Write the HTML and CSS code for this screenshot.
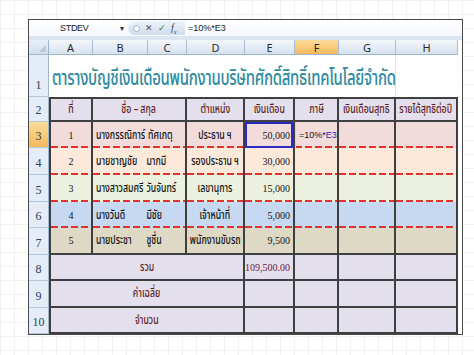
FILE: index.html
```html
<!DOCTYPE html>
<html lang="th">
<head>
  <meta charset="UTF-8" />
  <title>ตารางบัญชีเงินเดือน</title>
  <link rel="stylesheet" href="styles.css">
</head>
<body>

  <div class="window">
    <div class="formula-bar">
      <div class="name-box">STDEV</div>
      <div class="name-arrow">▾</div>
      <div class="fx-buttons">
        <span class="dot"></span>
        <span class="btn-x">✕</span>
        <span class="btn-ok">✓</span>
        <span class="btn-fx">f<sub>x</sub></span>
      </div>
      <div class="formula">=10%*E3</div>
    </div>

    <div class="sheet">
      <!-- column headers -->
      <div class="corner"></div>
      <div class="col-head">A</div>
      <div class="col-head">B</div>
      <div class="col-head">C</div>
      <div class="col-head">D</div>
      <div class="col-head">E</div>
      <div class="col-head active">F</div>
      <div class="col-head">G</div>
      <div class="col-head">H</div>

      <!-- row 1 -->
      <div class="row-head">1</div>
      <div class="title"><span>ตารางบัญชีเงินเดือนพนักงานบริษัทศักดิ์สิทธิ์เทคโนโลยีจำกัด</span></div>
      <div class="blank"></div>

      <!-- row 2 -->
      <div class="row-head">2</div>
      <div class="cell th first"><span>ที่</span></div>
      <div class="cell th span2"><span>ชื่อ – สกุล</span></div>
      <div class="cell th"><span>ตำแหน่ง</span></div>
      <div class="cell th"><span>เงินเดือน</span></div>
      <div class="cell th"><span>ภาษี</span></div>
      <div class="cell th"><span>เงินเดือนสุทธิ</span></div>
      <div class="cell th"><span>รายได้สุทธิต่อปี</span></div>

      <!-- row 3 -->
      <div class="row-head active">3</div>
      <div class="cell r3 dash first idx">1</div>
      <div class="cell r3 dash span2 name"><span><b class="fname">นางกรรณิการ์</b>ทัศเกตุ</span></div>
      <div class="cell r3 dash center"><span>ประธาน ฯ</span></div>
      <div class="cell r3 dash num ref">50,000</div>
      <div class="cell r3 dash edit">=10%*<i class="ref-text">E3</i></div>
      <div class="cell r3 dash"></div>
      <div class="cell r3 dash"></div>

      <!-- row 4 -->
      <div class="row-head">4</div>
      <div class="cell r4 dash first idx">2</div>
      <div class="cell r4 dash span2 name"><span><b class="fname">นายชาญชัย</b>มากมี</span></div>
      <div class="cell r4 dash center"><span>รองประธาน ฯ</span></div>
      <div class="cell r4 dash num">30,000</div>
      <div class="cell r4 dash"></div>
      <div class="cell r4 dash"></div>
      <div class="cell r4 dash"></div>

      <!-- row 5 -->
      <div class="row-head">5</div>
      <div class="cell r5 dash first idx">3</div>
      <div class="cell r5 dash span2 name"><span><b class="fname">นางสาวสมศรี</b>วันจันทร์</span></div>
      <div class="cell r5 dash center"><span>เลขานุการ</span></div>
      <div class="cell r5 dash num">15,000</div>
      <div class="cell r5 dash"></div>
      <div class="cell r5 dash"></div>
      <div class="cell r5 dash"></div>

      <!-- row 6 -->
      <div class="row-head">6</div>
      <div class="cell r6 dash first idx">4</div>
      <div class="cell r6 dash span2 name"><span><b class="fname">นางวันดี</b>มีชัย</span></div>
      <div class="cell r6 dash center"><span>เจ้าหน้าที่</span></div>
      <div class="cell r6 dash num">5,000</div>
      <div class="cell r6 dash"></div>
      <div class="cell r6 dash"></div>
      <div class="cell r6 dash"></div>

      <!-- row 7 -->
      <div class="row-head">7</div>
      <div class="cell r7 solid first idx">5</div>
      <div class="cell r7 solid span2 name"><span><b class="fname">นายประชา</b>ชูชื่น</span></div>
      <div class="cell r7 solid center"><span>พนักงานขับรถ</span></div>
      <div class="cell r7 solid num">9,500</div>
      <div class="cell r7 solid"></div>
      <div class="cell r7 solid"></div>
      <div class="cell r7 solid"></div>

      <!-- totals -->
      <div class="row-head">8</div>
      <div class="cell sum solid first span4 label"><span>รวม</span></div>
      <div class="cell sum solid num total">109,500.00</div>
      <div class="cell sum solid"></div>
      <div class="cell sum solid"></div>
      <div class="cell sum solid"></div>

      <div class="row-head">9</div>
      <div class="cell sum solid first span4 label"><span>ค่าเฉลี่ย</span></div>
      <div class="cell sum solid"></div>
      <div class="cell sum solid"></div>
      <div class="cell sum solid"></div>
      <div class="cell sum solid"></div>

      <div class="row-head">10</div>
      <div class="cell sum solid first span4 label"><span>จำนวน</span></div>
      <div class="cell sum solid"></div>
      <div class="cell sum solid"></div>
      <div class="cell sum solid"></div>
      <div class="cell sum solid"></div>
    </div>
  </div>

</body>
</html>
```

FILE: styles.css
```css
body {
  margin: 0;
  padding: 19px 0 0 28px;
  height: 355px;
  box-sizing: border-box;
  overflow: hidden;
  font-family: "Noto Sans Thai", "Loma", "Garuda", "Noto Sans", sans-serif;
  background-color: #ffffff;
  background-image:
    linear-gradient(90deg, #f1f1f1 1px, transparent 1px),
    linear-gradient(#f1f1f1 1px, transparent 1px);
  background-size: 14px 14px;
}
.window {
  width: 435px;
  height: 316px;
  box-sizing: border-box;
  border: 1px solid #4a4a4a;
  background: #ffffff;
  display: flex;
  flex-direction: column;
}
.formula-bar {
  height: 20px;
  box-sizing: border-box;
  border-bottom: 4px solid #dbe5f1;
  display: flex;
  align-items: center;
  font-family: "Liberation Sans", sans-serif;
  font-size: 9px;
  color: #222;
  background: linear-gradient(#ffffff, #f4f7fb);
}
.name-box {
  width: 60px;
  padding-left: 31px;
  letter-spacing: -0.3px;
}
.name-arrow {
  width: 6px;
  font-size: 8px;
  color: #333;
}
.fx-buttons {
  display: flex;
  align-items: center;
  gap: 5px;
  height: 14px;
  margin-left: 2px;
  padding: 0 3px 0 5px;
  width: 49px;
  border-radius: 8px 0 0 8px;
  background: linear-gradient(#eef3fa, #cfdcec);
  font-size: 9px;
  color: #555;
}
.dot {
  width: 5px;
  height: 5px;
  border-radius: 50%;
  border: 1px solid #9fb3cc;
  background: #ffffff;
}
.btn-ok {
  color: #3a7a3a;
}
.btn-fx {
  font-family: "Liberation Serif", serif;
  font-style: italic;
  font-size: 10px;
  color: #444;
}
.btn-fx sub {
  font-size: 6px;
}
.formula {
  margin-left: 3px;
  font-size: 9px;
}
.sheet {
  display: grid;
  grid-template-columns: 20px 44px 55px 39px 58px 50px 44px 57px 62px;
  grid-template-rows: 15px 42px 25px 26px 27px 27px 26px 27px 26px 27px 26px;
}
.corner {
  background: linear-gradient(#e9eff7, #d3deec);
  border-right: 1px solid #9eb6ce;
  border-bottom: 1px solid #9eb6ce;
  position: relative;
}
.corner::after {
  content: "";
  position: absolute;
  right: 2px;
  bottom: 2px;
  border-left: 7px solid transparent;
  border-bottom: 7px solid #b8c9dd;
}
.col-head {
  background: linear-gradient(#f4f7fb, #d6e1ee);
  border-right: 1px solid #a9bdd4;
  border-bottom: 1px solid #9eb6ce;
  display: flex;
  align-items: center;
  justify-content: center;
  font-family: "Noto Sans", sans-serif;
  font-size: 11px;
  color: #2a2a2a;
}
.col-head.active,
.row-head.active {
  background: linear-gradient(#fbdc9a, #f3b95c);
}
.row-head {
  background: #e4ecf7;
  border-right: 1px solid #9eb6ce;
  border-bottom: 1px solid #b4c6da;
  display: flex;
  align-items: flex-end;
  justify-content: center;
  padding-bottom: 3px;
  box-sizing: border-box;
  font-family: "Liberation Serif", serif;
  font-size: 12px;
  color: #2d3f56;
}
.title {
  grid-column: span 7;
  display: flex;
  align-items: center;
  padding: 4px 0 0 3px;
  white-space: nowrap;
  font-size: 21px;
  font-weight: 500;
  color: #2e8aa0;
  letter-spacing: -0.4px;
  border-right: 1px solid #e3e3e3;
}
.title span {
  display: inline-block;
  transform: scaleX(0.71);
  transform-origin: left center;
}
.cell {
  box-sizing: border-box;
  border-right: 2px solid #3f3f3f;
  display: flex;
  align-items: center;
  font-size: 12.5px;
  font-weight: 500;
  color: #141414;
  white-space: nowrap;
  overflow: hidden;
}
.cell > span {
  display: inline-block;
  flex: none;
  transform: scaleX(0.7);
}
.first {
  border-left: 2px solid #3f3f3f;
}
.span2 {
  grid-column: span 2;
}
.span4 {
  grid-column: span 4;
}
.th {
  background: #e4dfec;
  border-top: 2px solid #3f3f3f;
  border-bottom: 2px solid #3f3f3f;
  justify-content: center;
  color: #5e1f24;
}
.center {
  justify-content: center;
}
.idx {
  justify-content: center;
  font-family: "Liberation Serif", serif;
  font-size: 10px;
  font-weight: normal;
}
.name {
  padding-left: 3px;
}
.name > span {
  transform-origin: left center;
}
.fname {
  display: inline-block;
  min-width: 68px;
  margin-right: 4px;
  font-weight: 500;
}
.num {
  justify-content: flex-end;
  padding-right: 3px;
  font-family: "Liberation Serif", serif;
  font-size: 10px;
  font-weight: normal;
}
.label {
  justify-content: center;
  color: #5e1f24;
}
.total {
  color: #6b1a3a;
}
.r3 { background-color: #f2dcdb; }
.r4 { background-color: #fde9d9; }
.r5 { background-color: #ebf1de; }
.r6 { background-color: #c6d9f1; }
.r7 { background-color: #ddd9c4; }
.sum { background-color: #e4dfec; }
.dash {
  background-image: repeating-linear-gradient(90deg, #e2322f 0 7px, transparent 7px 10px);
  background-size: 100% 2px;
  background-position: left bottom;
  background-repeat: no-repeat;
}
.solid {
  border-bottom: 2px solid #3f3f3f;
}
.ref {
  box-shadow: inset 0 0 0 2px #2b2bc4;
}
.edit {
  padding-left: 4px;
  font-family: "Liberation Sans", sans-serif;
  font-size: 9px;
  font-weight: normal;
  box-shadow: inset 1px 0 0 #e8e070;
}
.ref-text {
  font-style: normal;
  color: #2b2bc4;
}
```
